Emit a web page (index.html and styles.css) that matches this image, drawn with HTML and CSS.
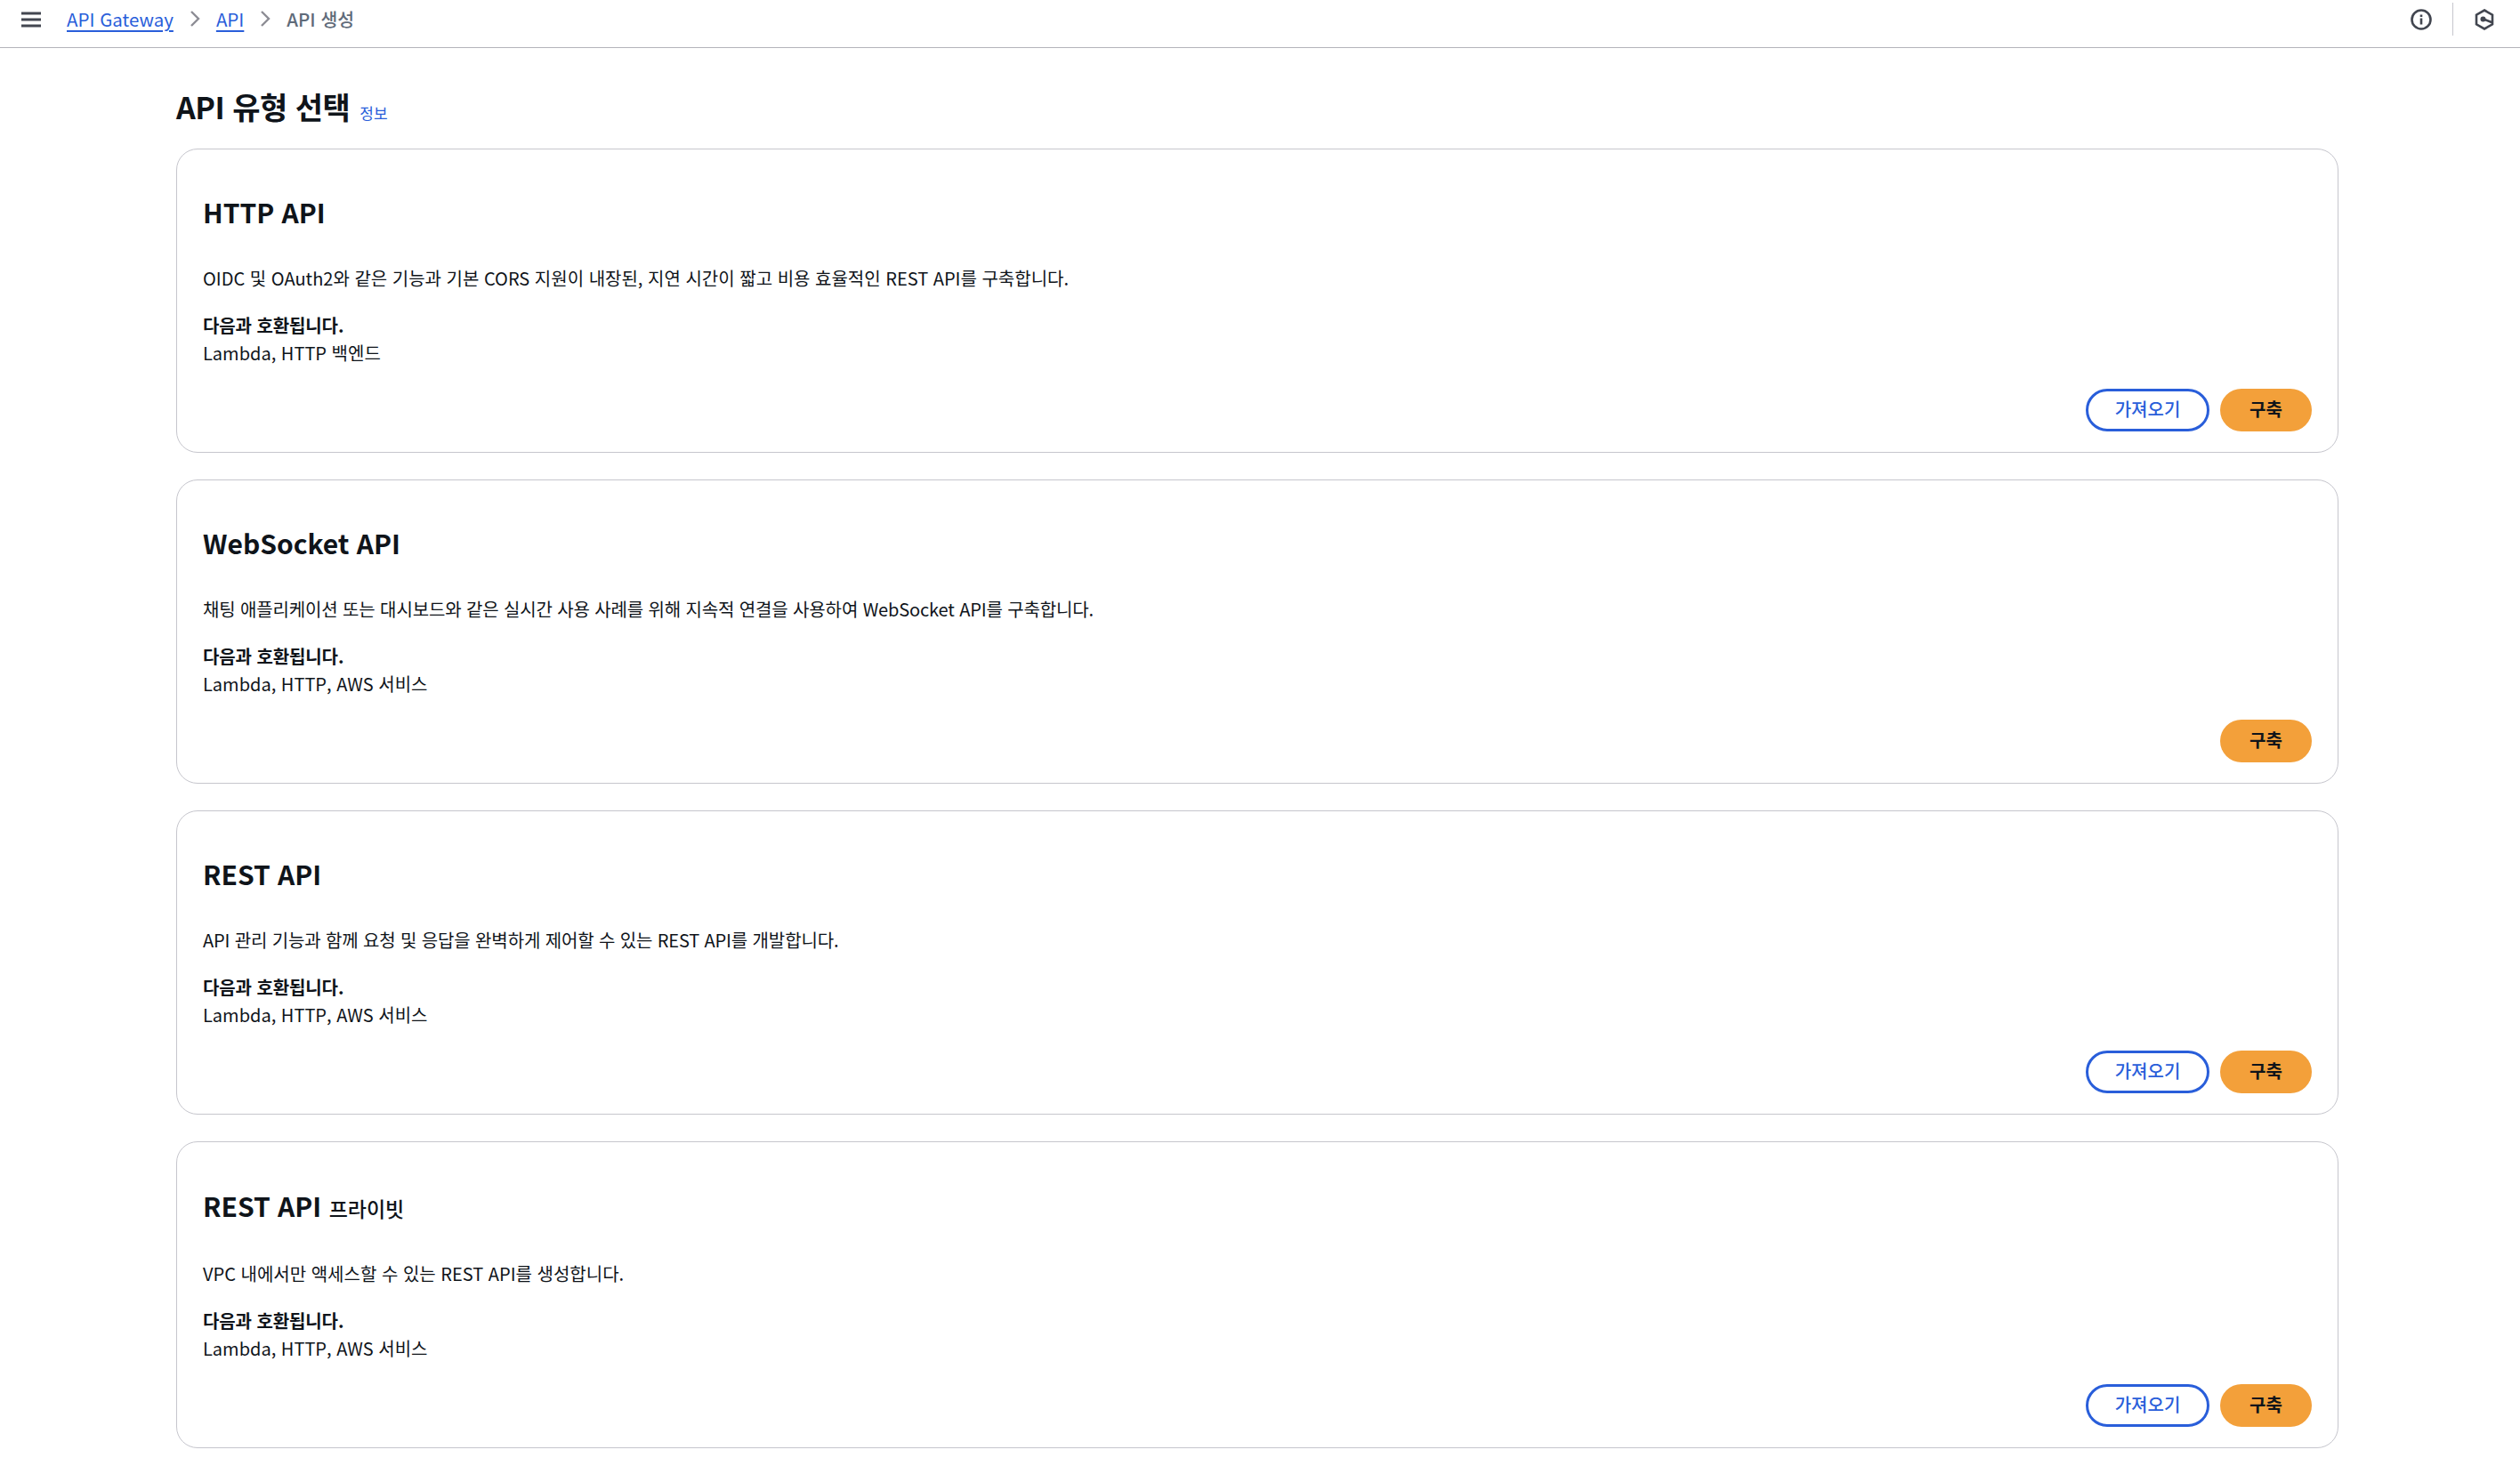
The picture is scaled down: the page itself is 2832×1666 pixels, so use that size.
FILE: index.html
```html
<!DOCTYPE html>
<html lang="ko">
<head>
    <meta charset="UTF-8">
    <meta name="viewport" content="width=device-width, initial-scale=1.0">
    <title>API 생성</title>
    <link rel="stylesheet" href="styles.css">
</head>
<body>
    <!-- Barra superior -->
    <header class="topbar">
        <svg class="menu-icon" viewBox="0 0 22 18"><path d="M0 2h22M0 9h22M0 16h22"/></svg>
        <nav class="crumbs">
            <a href="#">API Gateway</a>
            <svg class="chevron" viewBox="0 0 12 20"><path d="M2 2l8 8-8 8"/></svg>
            <a href="#">API</a>
            <svg class="chevron" viewBox="0 0 12 20"><path d="M2 2l8 8-8 8"/></svg>
            <span class="crumb-current">API 생성</span>
        </nav>
        <div class="topbar-tools">
            <svg class="tool-icon" viewBox="0 0 24 24"><circle cx="12" cy="12" r="10.5"/><path d="M12 10.500v7M12 6.500v2.600"/></svg>
            <div class="tool-sep"></div>
            <svg class="tool-icon" viewBox="0 0 24 24"><path d="M12 1.500l9 5.200v10.600l-9 5.200-9-5.200V6.700zM11 11.500l9 3.500"/><circle class="tool-dot" cx="10.500" cy="11.500" r="3"/></svg>
        </div>
    </header>

    <main class="page">
        <div class="page-title">
            <h1>API 유형 선택</h1>
            <a class="info-link" href="#">정보</a>
        </div>

        <section class="card">
            <h2>HTTP API</h2>
            <p class="desc">OIDC 및 OAuth2와 같은 기능과 기본 CORS 지원이 내장된, 지연 시간이 짧고 비용 효율적인 REST API를 구축합니다.</p>
            <div class="compat">
                <strong>다음과 호환됩니다.</strong>
                <span>Lambda, HTTP 백엔드</span>
            </div>
            <div class="actions">
                <button class="btn btn-line">가져오기</button>
                <button class="btn btn-main">구축</button>
            </div>
        </section>

        <section class="card">
            <h2>WebSocket API</h2>
            <p class="desc desc-tight">채팅 애플리케이션 또는 대시보드와 같은 실시간 사용 사례를 위해 지속적 연결을 사용하여 WebSocket API를 구축합니다.</p>
            <div class="compat">
                <strong>다음과 호환됩니다.</strong>
                <span>Lambda, HTTP, AWS 서비스</span>
            </div>
            <div class="actions">
                <button class="btn btn-main">구축</button>
            </div>
        </section>

        <section class="card">
            <h2>REST API</h2>
            <p class="desc desc-tight">API 관리 기능과 함께 요청 및 응답을 완벽하게 제어할 수 있는 REST API를 개발합니다.</p>
            <div class="compat">
                <strong>다음과 호환됩니다.</strong>
                <span>Lambda, HTTP, AWS 서비스</span>
            </div>
            <div class="actions">
                <button class="btn btn-line">가져오기</button>
                <button class="btn btn-main">구축</button>
            </div>
        </section>

        <section class="card card-last">
            <h2>REST API <small>프라이빗</small></h2>
            <p class="desc">VPC 내에서만 액세스할 수 있는 REST API를 생성합니다.</p>
            <div class="compat">
                <strong>다음과 호환됩니다.</strong>
                <span>Lambda, HTTP, AWS 서비스</span>
            </div>
            <div class="actions">
                <button class="btn btn-line">가져오기</button>
                <button class="btn btn-main">구축</button>
            </div>
        </section>
    </main>
</body>
</html>
```

FILE: styles.css
```css
body {
    margin: 0;
    background: #fff;
    color: #0f141a;
    font-family: "Noto Sans CJK KR", "Noto Sans", sans-serif;
    font-size: 20px;
}
.topbar {
    height: 53px;
    border-bottom: 1px solid #b4b4bb;
    display: flex;
    align-items: center;
    padding: 0 28px 0 24px;
}
.menu-icon {
    width: 22px;
    height: 18px;
    margin-top: -9px;
    fill: none;
    stroke: #424650;
    stroke-width: 3;
}
.crumbs {
    display: flex;
    align-items: center;
    gap: 18px;
    margin-left: 29px;
    margin-top: -11px;
    font-size: 20.500px;
}
.crumbs a {
    color: #295eda;
    text-decoration: underline;
    text-decoration-thickness: 2px;
    text-underline-offset: 4px;
}
.chevron {
    width: 12px;
    height: 20px;
    fill: none;
    stroke: #8c8c94;
    stroke-width: 2.400;
}
.crumb-current {
    color: #5f6b7a;
    font-weight: 500;
}
.topbar-tools {
    margin-left: auto;
    display: flex;
    align-items: center;
    margin-top: -10px;
}
.tool-icon {
    width: 24px;
    height: 24px;
    fill: none;
    stroke: #424650;
    stroke-width: 2.600;
}
.tool-dot {
    fill: #424650;
    stroke: none;
}
.tool-sep {
    width: 1px;
    height: 37px;
    background: #c6c6cd;
    margin: 0 23px;
}
.page {
    width: 2430px;
    margin-left: 198px;
}
.page-title {
    display: flex;
    align-items: baseline;
    gap: 11px;
    height: 113px;
    box-sizing: border-box;
    padding-top: 41px;
}
h1 {
    margin: 0;
    font-size: 34px;
    font-weight: 700;
    letter-spacing: -0.500px;
}
.info-link {
    color: #295eda;
    font-size: 17px;
    text-decoration: none;
}
.card {
    border: 1.500px solid #c6c6cd;
    border-radius: 24px;
    height: 342px;
    box-sizing: border-box;
    margin-bottom: 30px;
    padding: 0 29px;
    display: flex;
    flex-direction: column;
}
.card-last {
    height: 345px;
}
h2 {
    margin: 48px 0 0;
    font-size: 30px;
    line-height: 44px;
    font-weight: 700;
}
.card-last h2 {
    margin-top: 49px;
}
h2 small {
    font-size: 23px;
    font-weight: 500;
}
.desc {
    margin: 38px 0 0;
    line-height: 30px;
}
.desc-tight {
    letter-spacing: -0.130px;
}
.card-last .desc {
    margin-top: 37px;
}
.compat {
    margin-top: 23px;
    display: flex;
    flex-direction: column;
    line-height: 30.500px;
}
.compat strong {
    font-weight: 700;
    letter-spacing: -0.100px;
}
.actions {
    margin-top: auto;
    margin-bottom: 23px;
    display: flex;
    justify-content: flex-end;
    gap: 12px;
}
.btn {
    height: 48px;
    border-radius: 24px;
    font-family: inherit;
    font-size: 20px;
    font-weight: 500;
    cursor: pointer;
    padding: 0 0 3px;
}
.btn-line {
    width: 139px;
    background: #fff;
    color: #295eda;
    border: 3px solid #295eda;
}
.btn-main {
    width: 103px;
    background: #f3a03a;
    color: #0f141a;
    border: none;
    font-weight: 700;
}
```
